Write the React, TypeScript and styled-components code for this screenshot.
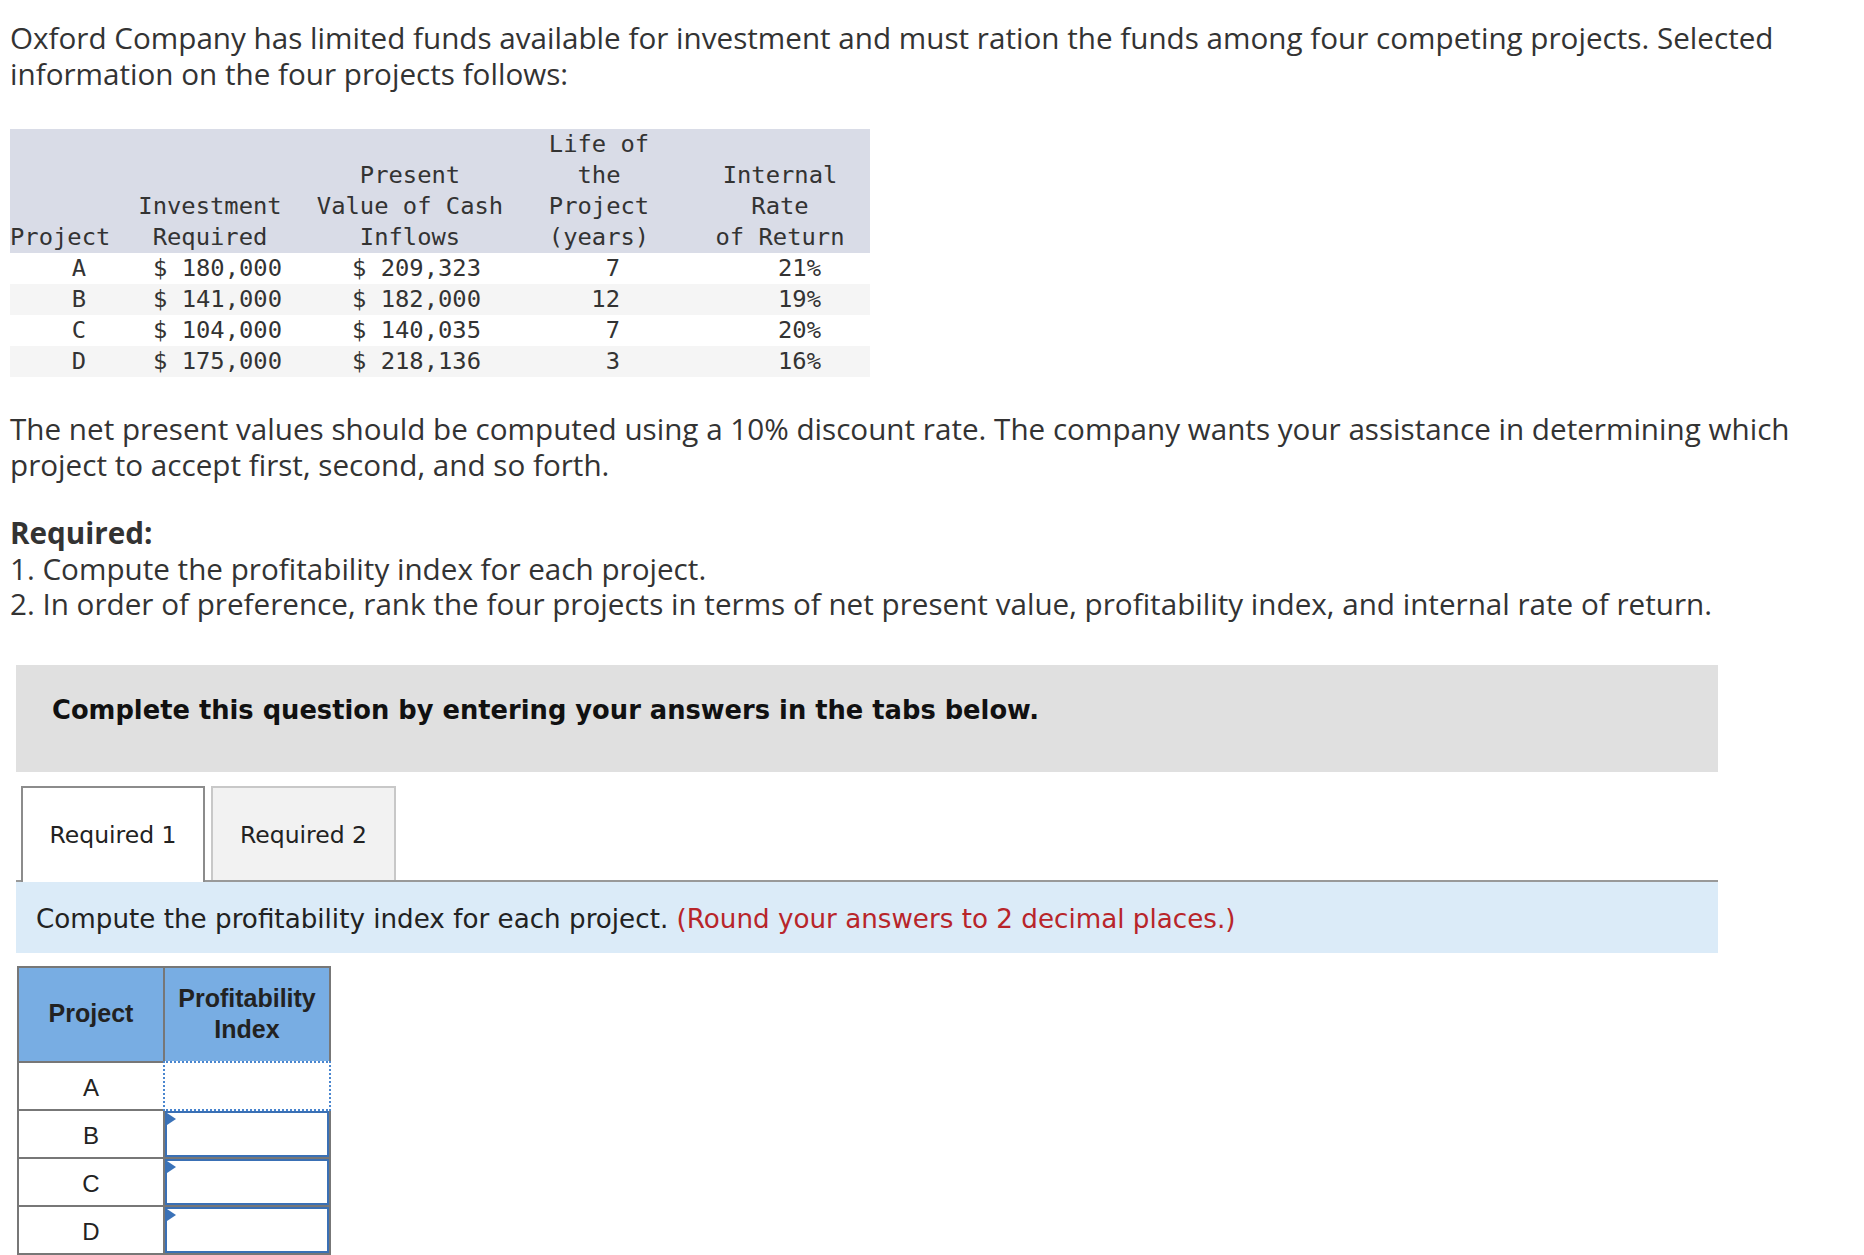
import React from "react";
import styled, { createGlobalStyle } from "styled-components";

const GlobalStyle = createGlobalStyle`
  body {
    margin: 0;
    background: #ffffff;
    color: #333333;
    font-family: "Open Sans", "Liberation Sans", sans-serif;
  }
`;

const Page = styled.div`
  padding: 0 10px;
`;

const Text = styled.p<{ $top: number }>`
  margin: ${(p) => p.$top}px 0 0;
  font-size: 29.65px;
  line-height: 35.7px;
  color: #333333;
`;

const Bold = styled.div`
  font-weight: 700;
`;

/* source data table */
const DataGrid = styled.div`
  margin-top: 38px;
  display: grid;
  grid-template-columns: 102px 196px 204px 174px 184px;
  font-family: "DejaVu Sans Mono", "Liberation Mono", monospace;
  font-size: 23.8px;
  line-height: 31px;
  color: #333333;
  width: 860px;
`;

const HeadCell = styled.div<{ $align: string; $pl?: number }>`
  background: #d9dce7;
  height: 124px;
  display: flex;
  flex-direction: column;
  justify-content: flex-end;
  text-align: ${(p) => p.$align};
  padding-left: ${(p) => p.$pl || 0}px;
  white-space: pre;
`;

const DataCell = styled.div<{ $shade: boolean; $pr: number }>`
  background: ${(p) => (p.$shade ? "#f5f5f5" : "#ffffff")};
  text-align: right;
  padding-right: ${(p) => p.$pr}px;
  white-space: pre;
`;

/* question box and tabs */
const Notice = styled.div`
  margin: 42.4px 0 0 6px;
  width: 1702px;
  height: 107px;
  box-sizing: border-box;
  background: #e0e0e0;
  padding: 30px 36px 0;
  font-family: "DejaVu Sans", Verdana, sans-serif;
  font-weight: 700;
  font-size: 25.75px;
  line-height: 30px;
  color: #111111;
`;

const TabBar = styled.div`
  margin: 14px 0 0 6px;
  width: 1702px;
  height: 96px;
  padding-left: 5px;
  box-sizing: border-box;
  display: flex;
  align-items: flex-start;
  gap: 6px;
  border-bottom: 2px solid #999999;
`;

const Tab = styled.div<{ $active: boolean; $w: number }>`
  width: ${(p) => p.$w}px;
  height: ${(p) => (p.$active ? 96 : 94)}px;
  box-sizing: border-box;
  border: 2px solid ${(p) => (p.$active ? "#8c8c8c" : "#c8c8c8")};
  border-bottom: none;
  background: ${(p) => (p.$active ? "#ffffff" : "#f2f2f2")};
  display: flex;
  align-items: center;
  justify-content: center;
  padding-top: ${(p) => (p.$active ? 1 : 3)}px;
  font-family: "DejaVu Sans", Verdana, sans-serif;
  font-size: 23.5px;
  color: #222222;
  position: relative;
  z-index: 1;
`;

const InfoBar = styled.div`
  margin-left: 6px;
  width: 1702px;
  height: 71px;
  box-sizing: border-box;
  background: #dbebf8;
  padding: 22px 20px 0;
  font-family: "DejaVu Sans", Verdana, sans-serif;
  font-size: 26.2px;
  line-height: 30px;
  color: #222222;
`;

const Hint = styled.span`
  color: #b8252a;
`;

/* answer table */
const AnswerGrid = styled.div`
  margin: 13px 0 0 7px;
  display: grid;
  grid-template-columns: 144px 164px;
  grid-template-rows: 93px 46px 46px 46px 46px;
  gap: 2px;
  padding: 2px;
  width: max-content;
  background: #777777;
  font-family: "Liberation Sans", Arial, sans-serif;
  color: #222222;
`;

const AnswerHead = styled.div`
  background: #78ade3;
  display: flex;
  align-items: center;
  justify-content: center;
  text-align: center;
  font-weight: 700;
  font-size: 25px;
  line-height: 31px;
  padding-bottom: 1px;
`;

const RowLabel = styled.div`
  background: #ffffff;
  display: flex;
  align-items: center;
  justify-content: center;
  padding-top: 4px;
  font-size: 24px;
`;

const InputCell = styled.div<{ $focused: boolean }>`
  background: #ffffff;
  margin: ${(p) => (p.$focused ? "-2px" : "0")};
  border: 2px ${(p) => (p.$focused ? "dotted #4a86cf" : "solid #3a70b5")};
  position: relative;
  z-index: ${(p) => (p.$focused ? 1 : 0)};
`;

const Flag = styled.span`
  position: absolute;
  left: 0;
  top: 0;
  width: 0;
  height: 0;
  border-top: 6px solid transparent;
  border-bottom: 6px solid transparent;
  border-left: 9px solid #3a72b8;
`;

const columns = [
  { head: "Project", align: "left", pr: 26 },
  { head: "Investment\nRequired", align: "center", pr: 26 },
  { head: "Present\nValue of Cash\nInflows", align: "center", pr: 31 },
  { head: "Life of\nthe\nProject\n(years)", align: "center", pr: 66 },
  { head: "Internal\nRate\nof Return", align: "center", pr: 49, pl: 4 },
];

const projects = [
  ["A", "$ 180,000", "$ 209,323", "7", "21%"],
  ["B", "$ 141,000", "$ 182,000", "12", "19%"],
  ["C", "$ 104,000", "$ 140,035", "7", "20%"],
  ["D", "$ 175,000", "$ 218,136", "3", "16%"],
];

export default function App() {
  return (
    <Page>
      <GlobalStyle />
      <Text $top={20}>
        Oxford Company has limited funds available for investment and must ration the funds among four competing
        projects. Selected information on the four projects follows:
      </Text>

      <DataGrid>
        {columns.map((c) => (
          <HeadCell key={c.head} $align={c.align} $pl={c.pl}>
            {c.head}
          </HeadCell>
        ))}
        {projects.map((row, r) =>
          row.map((v, i) => (
            <DataCell key={`${r}-${i}`} $shade={r % 2 === 1} $pr={columns[i].pr}>
              {v}
            </DataCell>
          ))
        )}
      </DataGrid>

      <Text $top={33.6}>
        The net present values should be computed using a 10% discount rate. The company wants your assistance in
        determining which project to accept first, second, and so forth.
      </Text>

      <Text $top={32.6}>
        <Bold>Required:</Bold>
        <div>1. Compute the profitability index for each project.</div>
        <div>
          2. In order of preference, rank the four projects in terms of net present value, profitability index, and
          internal rate of return.
        </div>
      </Text>

      <Notice>Complete this question by entering your answers in the tabs below.</Notice>

      <TabBar>
        <Tab $active={true} $w={184}>Required 1</Tab>
        <Tab $active={false} $w={185}>Required 2</Tab>
      </TabBar>

      <InfoBar>
        Compute the profitability index for each project. <Hint>(Round your answers to 2 decimal places.)</Hint>
      </InfoBar>

      <AnswerGrid>
        <AnswerHead>Project</AnswerHead>
        <AnswerHead>
          Profitability
          <br />
          Index
        </AnswerHead>
        {["A", "B", "C", "D"].map((p, i) => (
          <React.Fragment key={p}>
            <RowLabel>{p}</RowLabel>
            <InputCell $focused={i === 0}>{i > 0 && <Flag />}</InputCell>
          </React.Fragment>
        ))}
      </AnswerGrid>
    </Page>
  );
}
